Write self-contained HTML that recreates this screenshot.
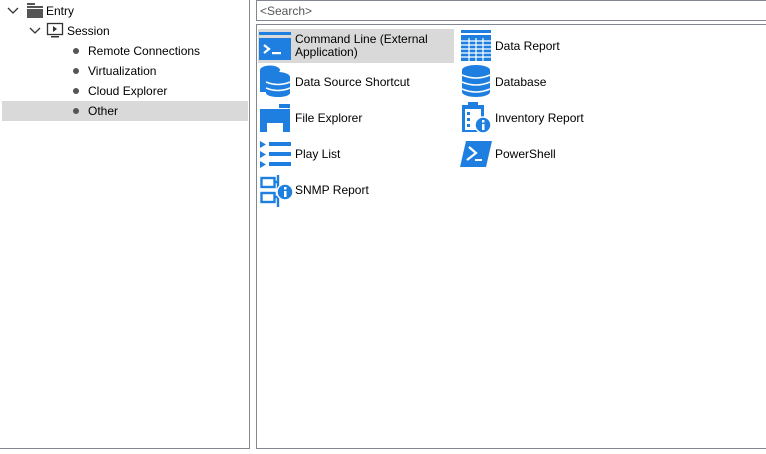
<!DOCTYPE html>
<html><head><meta charset="utf-8"><style>
*{margin:0;padding:0;box-sizing:border-box}
body{width:766px;height:454px;background:#fff;font-family:"Liberation Sans",sans-serif;font-size:12px;color:#000;position:relative;overflow:hidden}
.left{position:absolute;left:-1px;top:-1px;width:251px;height:450px;border:1px solid #828790}
.search{position:absolute;left:256px;top:0;width:520px;height:21px;border:1px solid #828790;color:#555;padding:3px 0 0 3px}
.list{position:absolute;left:256px;top:24px;width:520px;height:425px;border:1px solid #828790}
.t{position:absolute;white-space:nowrap}
.dot{position:absolute;width:6px;height:6px;border-radius:3px;background:#555}
.sel{position:absolute;background:#d9d9d9}
svg{position:absolute}
</style></head><body>
<div class="left"></div>
<div class="sel" style="left:2px;top:101px;width:246px;height:20px"></div>
<svg style="left:7px;top:6px" width="12" height="10"><path d="M1 2l5 5 5-5" stroke="#333" stroke-width="1.3" fill="none"/></svg>
<svg style="left:26px;top:2px" width="18" height="16"><rect x="1" y="1" width="8" height="2" fill="#555"/><rect x="1" y="4" width="16" height="2" fill="#555"/><rect x="1" y="7" width="16" height="9" fill="#555"/></svg>
<div class="t" style="left:46px;top:4px">Entry</div>
<svg style="left:29px;top:26px" width="12" height="10"><path d="M1 2l5 5 5-5" stroke="#333" stroke-width="1.3" fill="none"/></svg>
<svg style="left:46px;top:22px" width="18" height="16"><rect x="1.5" y="1.5" width="15" height="11" fill="none" stroke="#333" stroke-width="1.3"/><path d="M7 4v6l4-3z" fill="#333"/><rect x="5" y="14" width="8" height="1.5" fill="#333"/></svg>
<div class="t" style="left:67px;top:24px">Session</div>
<div class="dot" style="left:73px;top:48px"></div><div class="t" style="left:88px;top:44px">Remote Connections</div>
<div class="dot" style="left:73px;top:68px"></div><div class="t" style="left:88px;top:64px">Virtualization</div>
<div class="dot" style="left:73px;top:88px"></div><div class="t" style="left:88px;top:84px">Cloud Explorer</div>
<div class="dot" style="left:73px;top:108px"></div><div class="t" style="left:88px;top:104px">Other</div>

<div class="search">&lt;Search&gt;</div>
<div class="list"></div>
<div class="sel" style="left:258px;top:29px;width:196px;height:34px"></div>
<svg style="left:259px;top:32px" width="32" height="28"><rect x="0" y="0" width="32" height="3" fill="#1e7fe0"/><rect x="0" y="6" width="32" height="22" fill="#1e7fe0"/><path d="M5 13l5 4-5 4" stroke="#fff" stroke-width="2.2" fill="none"/><rect x="13" y="20" width="9" height="2.2" fill="#fff"/></svg>
<div class="t" style="left:295px;top:33px;line-height:13px">Command Line (External<br>Application)</div>
<svg style="left:460px;top:30px" width="32" height="32"><rect x="1" y="0" width="30" height="3" fill="#1e7fe0"/><rect x="1" y="5" width="30" height="26" fill="#1e7fe0"/><g stroke="#fff" stroke-width="1.2"><path d="M1 11h30M1 15h30M1 19h30M1 23h30M1 27h30M9 8v23M16 8v23M23 8v23"/></g></svg>
<div class="t" style="left:495px;top:39px">Data Report</div>
<svg style="left:259px;top:65px" width="32" height="32"><g fill="#1e7fe0"><ellipse cx="11" cy="5" rx="10" ry="4.5"/><rect x="1" y="5" width="8" height="22"/><ellipse cx="19" cy="12" rx="12" ry="5"/><rect x="7" y="12" width="24" height="16"/><ellipse cx="19" cy="28" rx="12" ry="4"/></g><g stroke="#fff" stroke-width="1.5" fill="none"><path d="M7 17q12 5 24 0M7 23q12 5 24 0"/></g></svg>
<div class="t" style="left:295px;top:75px">Data Source Shortcut</div>
<svg style="left:460px;top:65px" width="32" height="32"><g fill="#1e7fe0"><ellipse cx="16" cy="5" rx="14" ry="5"/><rect x="2" y="5" width="28" height="22"/><ellipse cx="16" cy="27" rx="14" ry="5"/></g><g stroke="#fff" stroke-width="1.6" fill="none"><path d="M2 10q14 6 28 0M2 17q14 6 28 0M2 24q14 6 28 0"/></g></svg>
<div class="t" style="left:495px;top:75px">Database</div>
<svg style="left:259px;top:104px" width="32" height="28"><g fill="#1e7fe0"><rect x="20" y="0" width="11" height="4"/><path d="M1 5h30v23h-7v-9H8v9H1z"/></g></svg>
<div class="t" style="left:295px;top:111px">File Explorer</div>
<svg style="left:461px;top:101px" width="32" height="32"><g fill="#1e7fe0"><rect x="1" y="4" width="22" height="27"/><rect x="7" y="1" width="10" height="5"/></g><rect x="4" y="8" width="16" height="21" fill="#fff"/><g fill="#1e7fe0"><rect x="6" y="11" width="3" height="3"/><rect x="6" y="17" width="3" height="3"/><rect x="6" y="23" width="3" height="3"/></g><circle cx="22" cy="24" r="8" fill="#1e7fe0" stroke="#fff" stroke-width="1.5"/><rect x="21" y="23" width="2.5" height="6" fill="#fff"/><rect x="21" y="19" width="2.5" height="2.5" fill="#fff"/></svg>
<div class="t" style="left:495px;top:111px">Inventory Report</div>
<svg style="left:260px;top:141px" width="32" height="28"><g fill="#1e7fe0"><path d="M0 0l6 3.5-6 3.5zM0 10l6 3.5-6 3.5zM0 20l6 3.5-6 3.5z"/><rect x="9" y="1" width="22" height="4"/><rect x="9" y="11" width="22" height="4"/><rect x="9" y="21" width="22" height="4"/></g></svg>
<div class="t" style="left:295px;top:147px">Play List</div>
<svg style="left:460px;top:140px" width="32" height="28"><path d="M6 1h26l-6 26H0z" fill="#1e7fe0"/><path d="M9 7l7 6-9 7" stroke="#fff" stroke-width="2.2" fill="none"/><rect x="15" y="19" width="7" height="2" fill="#fff"/></svg>
<div class="t" style="left:495px;top:147px">PowerShell</div>
<svg style="left:260px;top:175px" width="34" height="32"><g fill="none" stroke="#1e7fe0" stroke-width="2.4"><rect x="1.5" y="3" width="13" height="9"/><rect x="1.5" y="18" width="13" height="9"/><path d="M18 0v32M14 7h4M14 22h4"/></g><circle cx="25" cy="17" r="8" fill="#1e7fe0" stroke="#fff" stroke-width="1.5"/><rect x="24" y="16" width="2.5" height="6" fill="#fff"/><rect x="24" y="12" width="2.5" height="2.5" fill="#fff"/></svg>
<div class="t" style="left:295px;top:183px">SNMP Report</div>
</body></html>
